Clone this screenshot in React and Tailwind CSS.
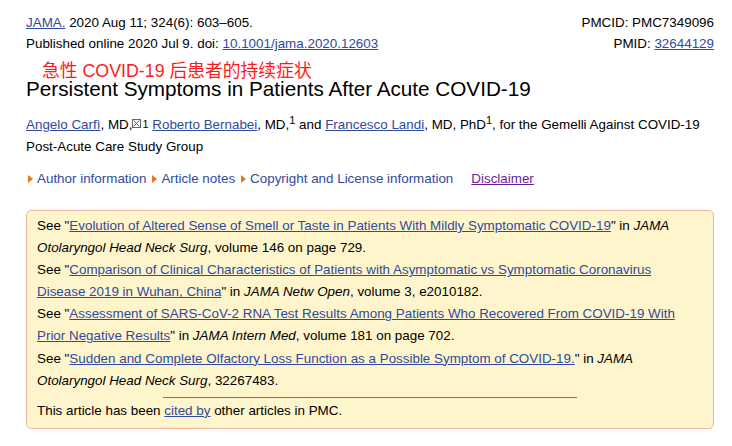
export default function App() {
  const link = "text-[#2f4a9e] underline";
  const tri = "inline-block w-0 h-0 border-y-[4px] border-y-transparent border-l-[5px] border-l-[#e8761b]";

  return (
    <div className="min-h-screen bg-white pl-[26px] pr-[18px] pt-[12px] text-[13.4px] text-black font-['Liberation_Sans',Arial,sans-serif]">
      <div className="flex justify-between leading-[21px]">
        <div>
          <a className={link}>JAMA.</a> 2020 Aug 11; 324(6): 603–605.
        </div>
        <div className="text-right">PMCID: PMC7349096</div>
      </div>
      <div className="flex justify-between leading-[21px]">
        <div>
          Published online 2020 Jul 9. doi:{" "}
          <a className={link}>10.1001/jama.2020.12603</a>
        </div>
        <div className="text-right">
          PMID: <a className={link}>32644129</a>
        </div>
      </div>

      <div className="mt-[7px] pl-[16px] text-[17.8px] leading-[20px] text-[#ff1a1a] font-['Liberation_Sans','Noto_Sans_CJK_SC',sans-serif]">
        急性 COVID-19 后患者的持续症状
      </div>
      <h1 className="text-[20.7px] leading-[16px] font-normal">
        Persistent Symptoms in Patients After Acute COVID-19
      </h1>

      <div className="mt-[17px] leading-[22px]">
        <a className={link}>Angelo Carfì</a>, MD,
        <sup className="relative -top-[1px] text-[11px]">
          <svg width="9" height="9" viewBox="0 0 9 9" className="inline-block align-baseline mr-[1px]">
            <rect x="0.5" y="0.5" width="8" height="8" fill="none" stroke="#666" strokeWidth="1" />
            <path d="M1.5 1.5 L7.5 7.5 M7.5 1.5 L1.5 7.5" stroke="#666" strokeWidth="1" />
          </svg>
          1
        </sup>{" "}
        <a className={link}>Roberto Bernabei</a>, MD,<sup className="text-[11px]">1</sup> and{" "}
        <a className={link}>Francesco Landi</a>, MD, PhD<sup className="text-[11px]">1</sup>, for the Gemelli Against COVID-19
        Post-Acute Care Study Group
      </div>

      <div className="mt-[10px] flex items-center gap-[6px] leading-[22px] text-[#2f4a9e]">
        <span className="flex items-center gap-[4px] pl-[2px]">
          <span className={tri} />
          Author information
        </span>
        <span className="flex items-center gap-[4px]">
          <span className={tri} />
          Article notes
        </span>
        <span className="flex items-center gap-[4px]">
          <span className={tri} />
          Copyright and License information
        </span>
        <a className="ml-[12px] text-[#6a1b9a] underline">Disclaimer</a>
      </div>

      <div className="mt-[20px] rounded-[5px] border border-[#f3b49c] bg-[#fff5cc] px-[10px] pt-[4px] pb-[6px] leading-[22.1px]">
        <div>
          See "<a className={link}>Evolution of Altered Sense of Smell or Taste in Patients With Mildly Symptomatic COVID-19</a>" in{" "}
          <i>JAMA Otolaryngol Head Neck Surg</i>, volume 146 on page 729.
        </div>
        <div>
          See "<a className={link}>Comparison of Clinical Characteristics of Patients with Asymptomatic vs Symptomatic Coronavirus Disease 2019 in Wuhan, China</a>" in{" "}
          <i>JAMA Netw Open</i>, volume 3, e2010182.
        </div>
        <div>
          See "<a className={link}>Assessment of SARS-CoV-2 RNA Test Results Among Patients Who Recovered From COVID-19 With Prior Negative Results</a>" in{" "}
          <i>JAMA Intern Med</i>, volume 181 on page 702.
        </div>
        <div>
          See "<a className={link}>Sudden and Complete Olfactory Loss Function as a Possible Symptom of COVID-19.</a>" in{" "}
          <i>JAMA Otolaryngol Head Neck Surg</i>, 32267483.
        </div>
        <div className="mx-auto mt-[5px] mb-[2px] h-px w-[414px] bg-[#6670a0]" />
        <div>
          This article has been <a className={link}>cited by</a> other articles in PMC.
        </div>
      </div>
    </div>
  );
}
